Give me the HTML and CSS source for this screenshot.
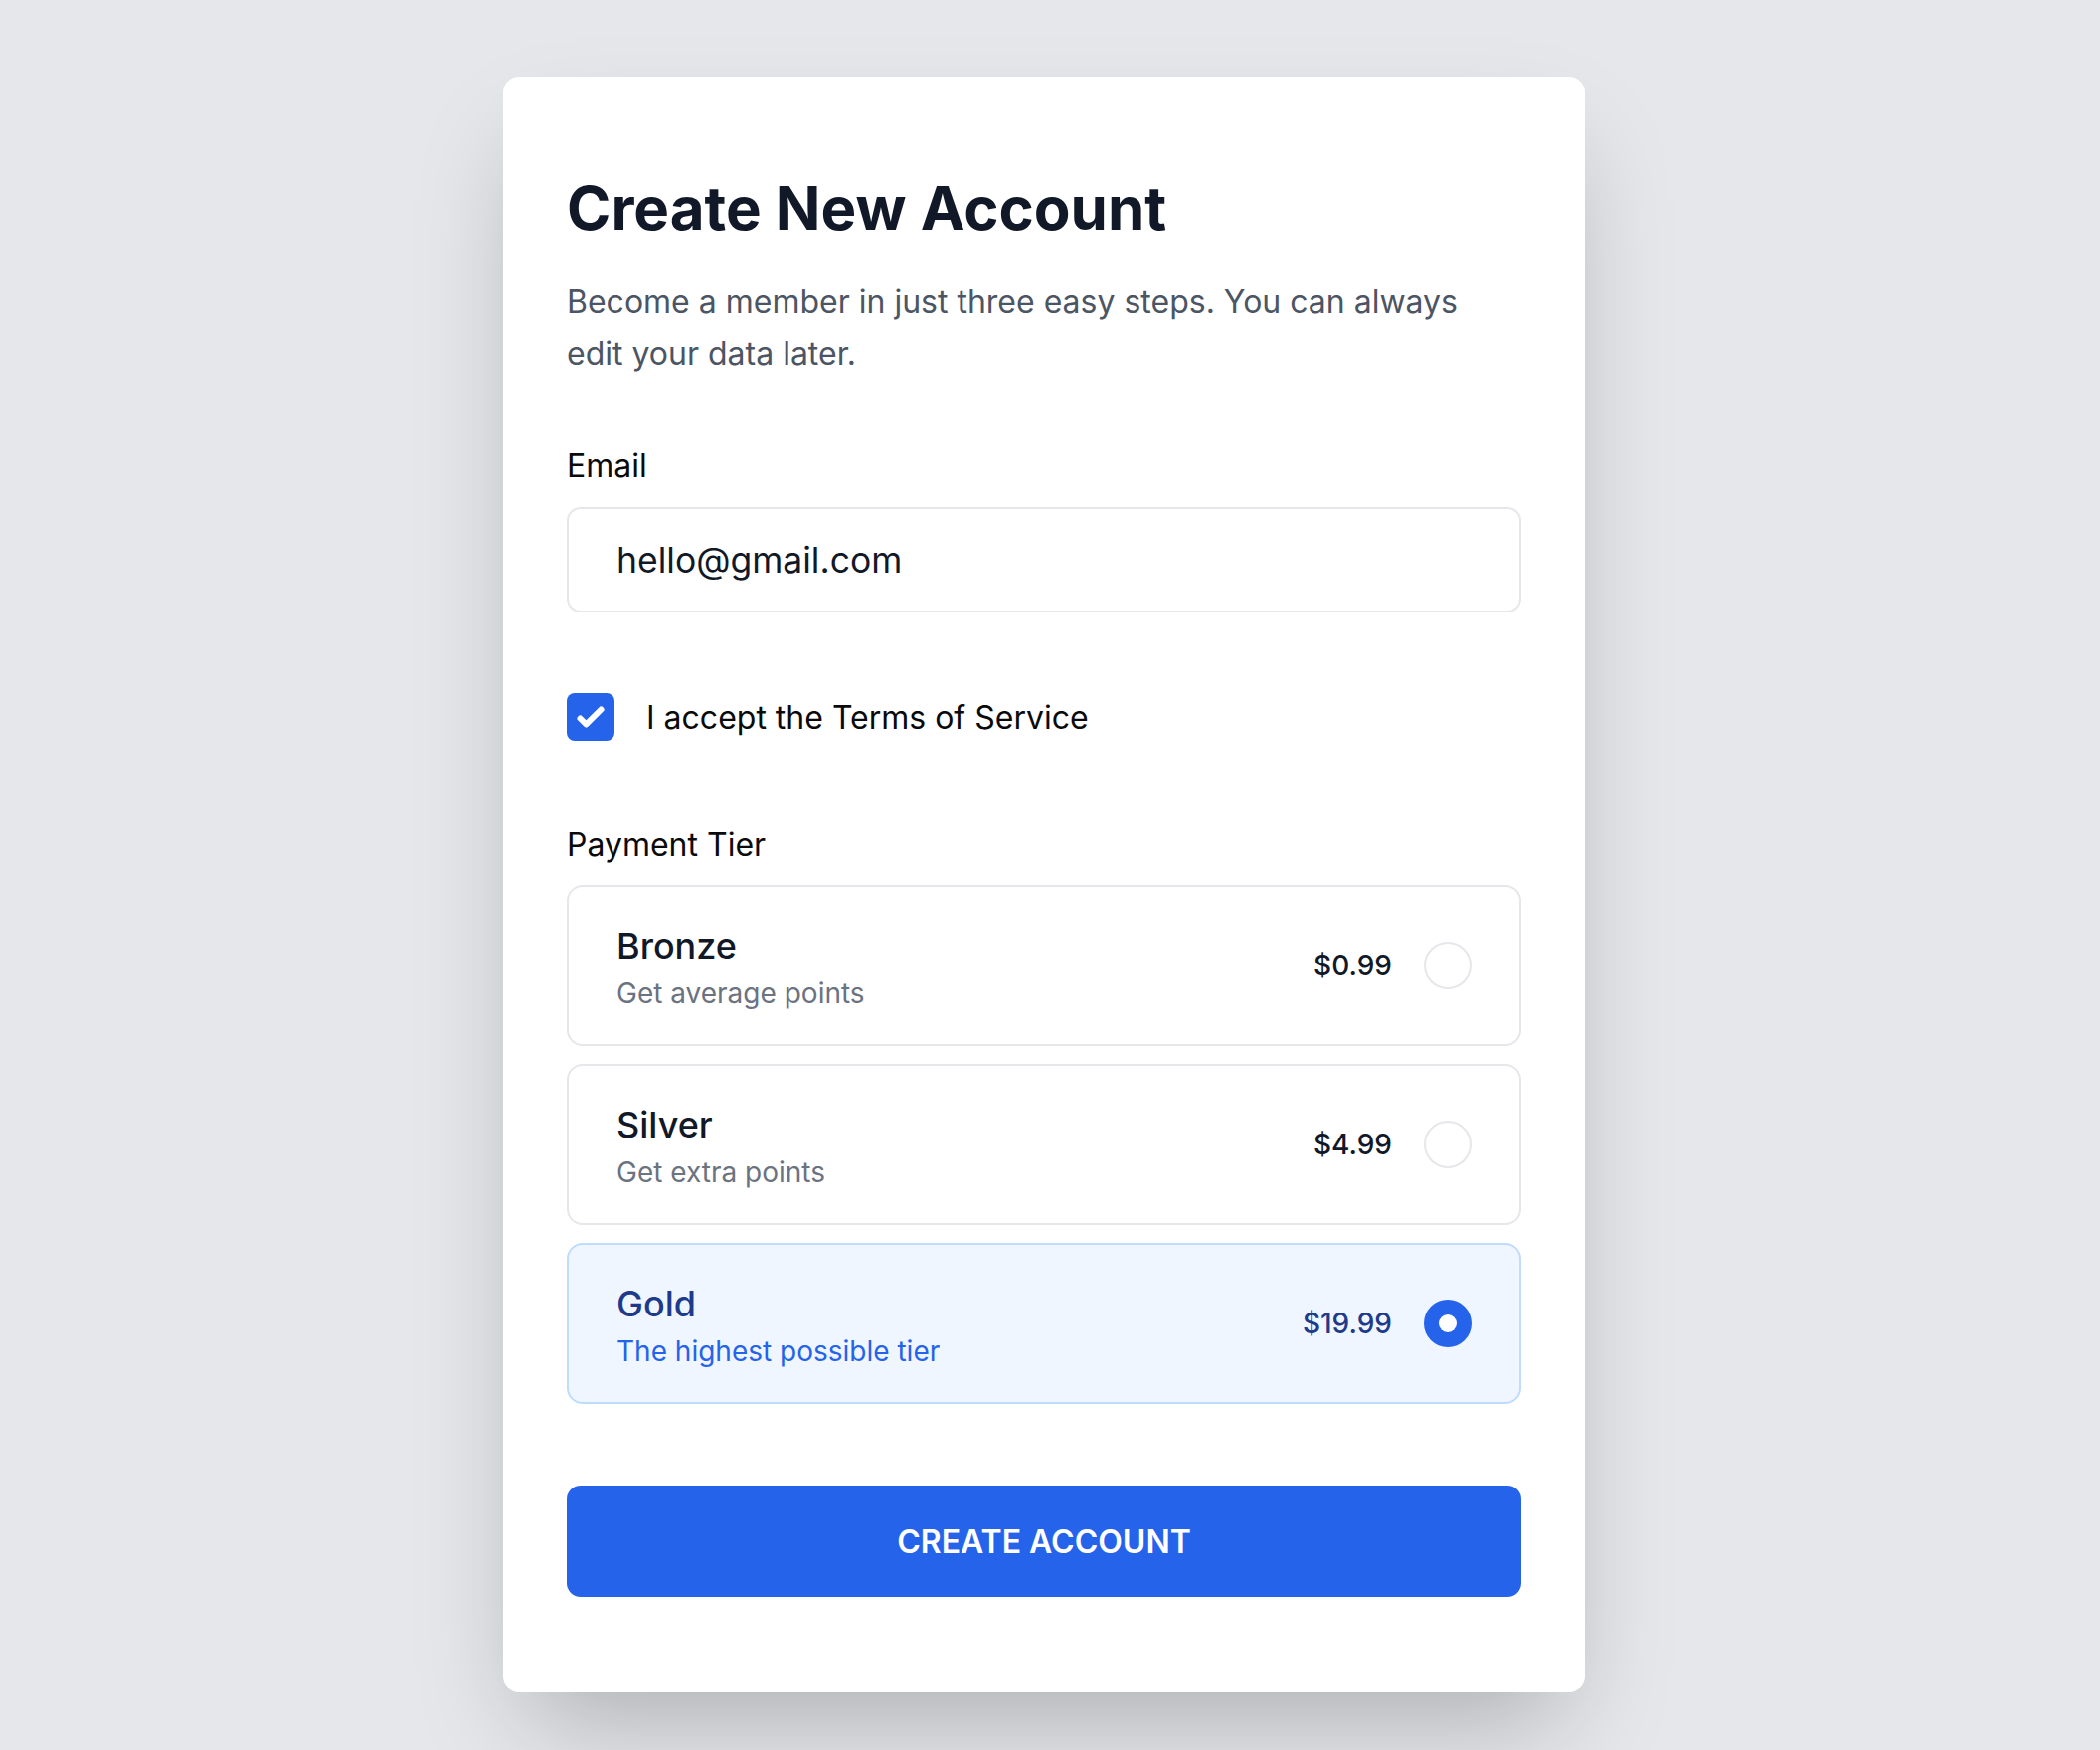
FILE: index.html
```html
<!DOCTYPE html>
<html lang="en">
<head>
<meta charset="utf-8">
<title>Create New Account</title>
<link rel="stylesheet" href="styles.css">
</head>
<body>
<div class="page">
  <form class="card">
    <h1 class="title">Create New Account</h1>
    <p class="subtitle">Become a member in just three easy steps. You can always edit your data later.</p>

    <div class="field">
      <label class="label" for="email">Email</label>
      <input class="input" id="email" type="email" value="hello@gmail.com">
    </div>

    <div class="terms">
      <span class="checkbox">
        <svg viewBox="0 0 16 16" width="48" height="48" aria-hidden="true"><path fill="#ffffff" d="M12.207 4.793a1 1 0 010 1.414l-5 5a1 1 0 01-1.414 0l-2-2a1 1 0 011.414-1.414L6.5 9.086l4.293-4.293a1 1 0 011.414 0z"/></svg>
      </span>
      <span class="terms-text">I accept the Terms of Service</span>
    </div>

    <div class="label tier-label">Payment Tier</div>
    <div class="tiers">
      <div class="tier">
        <div class="tier-info">
          <div class="tier-name">Bronze</div>
          <div class="tier-desc">Get average points</div>
        </div>
        <div class="tier-price">$0.99</div>
        <span class="radio"></span>
      </div>
      <div class="tier">
        <div class="tier-info">
          <div class="tier-name">Silver</div>
          <div class="tier-desc">Get extra points</div>
        </div>
        <div class="tier-price">$4.99</div>
        <span class="radio"></span>
      </div>
      <div class="tier selected">
        <div class="tier-info">
          <div class="tier-name">Gold</div>
          <div class="tier-desc">The highest possible tier</div>
        </div>
        <div class="tier-price">$19.99</div>
        <span class="radio checked"></span>
      </div>
    </div>

    <button class="button" type="button">Create Account</button>
  </form>
</div>
</body>
</html>
```

FILE: styles.css
```css
* { box-sizing: border-box; }

html, body {
  margin: 0;
  background: #e5e7eb;
  font-family: Inter, "Noto Sans", "Liberation Sans", sans-serif;
}

.page {
  display: flex;
  justify-content: center;
  padding: 77px 12px 60px 0;
  min-height: 1760px;
}

.card {
  width: 1088px;
  padding: 96px 64px;
  background: #ffffff;
  border-radius: 16px;
  box-shadow: 0 50px 100px -24px rgba(0, 0, 0, 0.25);
  align-self: flex-start;
}

.title {
  margin: 0;
  font-size: 60px;
  line-height: 72px;
  font-weight: 700;
  color: #111827;
}

.subtitle {
  max-width: 930px;
  margin: 33px 0 0;
  font-size: 32px;
  line-height: 52px;
  color: #4b5563;
}

.field { margin-top: 63px; }

.label {
  display: block;
  font-size: 32px;
  line-height: 48px;
  color: #0a0a0a;
}

.input {
  display: block;
  width: 100%;
  height: 106px;
  margin-top: 17px;
  padding: 0 48px;
  border: 2px solid #e5e7eb;
  border-radius: 14px;
  font-family: inherit;
  font-size: 35.5px;
  color: #111827;
  background: #ffffff;
  outline: none;
}

.terms {
  display: flex;
  align-items: center;
  gap: 32px;
  margin-top: 80px;
}

.checkbox {
  display: flex;
  width: 48px;
  height: 48px;
  border-radius: 8px;
  background: #2563eb;
}

.terms-text {
  font-size: 32px;
  line-height: 48px;
  color: #0a0a0a;
  padding-top: 2px;
}

.tier-label { margin-top: 80px; }

.tiers {
  display: flex;
  flex-direction: column;
  gap: 18px;
  margin-top: 16px;
}

.tier {
  display: flex;
  align-items: center;
  padding: 31px 48px;
  border: 2px solid #e5e7eb;
  border-radius: 16px;
  background: #ffffff;
}

.tier-info { flex: 1; }

.tier-name {
  font-size: 36px;
  line-height: 56px;
  font-weight: 500;
  color: #111827;
}

.tier-desc {
  font-size: 28px;
  line-height: 40px;
  color: #6b7280;
}

.tier-price {
  margin-right: 32px;
  font-size: 28px;
  line-height: 40px;
  font-weight: 500;
  color: #111827;
}

.radio {
  display: flex;
  align-items: center;
  justify-content: center;
  width: 48px;
  height: 48px;
  border: 2px solid #e5e7eb;
  border-radius: 50%;
  background: #ffffff;
}

.tier.selected {
  background: #eff6ff;
  border-color: #bfdbfe;
}

.tier.selected .tier-name,
.tier.selected .tier-price { color: #1e3a8a; }

.tier.selected .tier-desc { color: #2563eb; }

.radio.checked {
  border: none;
  background: #2563eb;
}

.radio.checked::after {
  content: "";
  width: 18px;
  height: 18px;
  border-radius: 50%;
  background: #ffffff;
}

.button {
  display: block;
  width: 100%;
  height: 112px;
  margin-top: 82px;
  border: none;
  border-radius: 14px;
  background: #2563eb;
  color: #ffffff;
  font-family: inherit;
  font-size: 32px;
  font-weight: 600;
  text-transform: uppercase;
}
```
